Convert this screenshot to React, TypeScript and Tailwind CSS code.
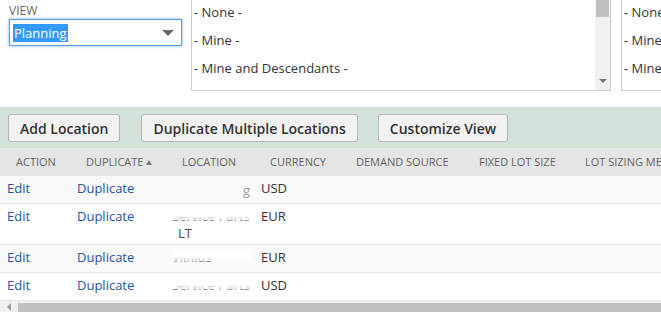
import React from "react";

const font = { fontFamily: '"Open Sans", "Liberation Sans", sans-serif' };

function ListBox({ withScroll }: { withScroll: boolean }) {
  const items = ["- None -", "- Mine -", "- Mine and Descendants -"];
  return (
    <div className="flex h-[91px] border-l border-r border-b border-[#cccccc] bg-white overflow-hidden">
      <div className="flex-1 flex flex-col -mt-[1px]">
        {items.map((t) => (
          <div key={t} className="h-[28px] flex items-center pl-[2px] text-[13px] text-[#333333] whitespace-nowrap">
            {t}
          </div>
        ))}
      </div>
      {withScroll && (
        <div className="w-[15px] bg-[#f0f0f0] flex flex-col justify-between items-center">
          <div className="w-[13px] h-[17px] bg-[#c1c1c1]" />
          <div className="mb-[7px] w-0 h-0 border-l-[4px] border-r-[4px] border-t-[4px] border-l-transparent border-r-transparent border-t-[#777777]" />
        </div>
      )}
    </div>
  );
}

function Redacted({ text, second }: { text: string; second?: string }) {
  return (
    <div className="relative">
      <div className="text-[#888888] whitespace-nowrap">{text}</div>
      {second && <div className="pl-[6px] text-[#444444]">{second}</div>}
      <div className="absolute left-0 top-0 w-[80px] h-[9px] bg-white" />
      <div className="absolute left-[-2px] top-[9px] w-[82px] h-[3px] bg-white opacity-60" />
    </div>
  );
}

export default function App() {
  const cols = "grid grid-cols-[70px_95px_89px_86px_123px_106px_120px]";
  const rows = [
    { cur: "USD", loc: <div className="relative h-[17px]"><span className="absolute left-[71px] top-[2px] text-[#999999]">g</span></div>, bg: "bg-[#f9f9f9]", h: "h-[28px]" },
    { cur: "EUR", loc: <Redacted text="Service Parts" second="LT" />, bg: "bg-white", h: "h-[41px]" },
    { cur: "EUR", loc: <Redacted text="Vilnius" />, bg: "bg-[#f9f9f9]", h: "h-[28px]" },
    { cur: "USD", loc: <Redacted text="Service Parts" />, bg: "bg-white", h: "h-[28px]" },
  ];
  return (
    <div style={font} className="w-[661px] h-[312px] overflow-hidden bg-white relative">
      <div className="flex h-[107px]">
        <div className="w-[191px] shrink-0 pl-[9px] pt-[4px]">
          <div className="text-[12px] leading-[14px] text-[#666666]">VIEW</div>
          <div className="mt-[1px] w-[173px] h-[27px] border border-[#5b9dd9] shadow-[0_0_3px_#7fb2e5] bg-white flex items-center justify-between pl-[3px] pr-[7px]">
            <span className="bg-[#3399ff] text-white text-[13px] leading-[18px] px-[1px]">Planning</span>
            <span className="w-0 h-0 border-l-[6px] border-r-[6px] border-t-[6px] border-l-transparent border-r-transparent border-t-[#666666]" />
          </div>
        </div>
        <div className="w-[420px] shrink-0">
          <ListBox withScroll={true} />
        </div>
        <div className="w-[10px] shrink-0" />
        <div className="w-[200px] shrink-0">
          <ListBox withScroll={false} />
        </div>
      </div>
      <div className="bg-[#d3e2d8] h-[41px] flex items-start pt-[7px] pl-[8px] gap-[20px]">
        {["Add Location", "Duplicate Multiple Locations", "Customize View"].map((b, i) => (
          <button
            key={b}
            className={`h-[28px] rounded-[3px] border border-[#b5b5b5] bg-[#f2f2f2] text-[14px] text-[#333333] font-semibold px-[11px] ${i === 1 ? "ml-[1px]" : ""}`}
          >
            {b}
          </button>
        ))}
      </div>
      <div className={`${cols} h-[28px] bg-[#e5e5e5] items-center text-[11px] text-[#666666] uppercase`}>
        <div className="pl-[16px]">Action</div>
        <div className="pl-[16px] flex items-center gap-[2px]">
          Duplicate
          <span className="w-0 h-0 border-l-[3px] border-r-[3px] border-b-[5px] border-l-transparent border-r-transparent border-b-[#777777]" />
        </div>
        <div className="pl-[17px]">Location</div>
        <div className="pl-[16px]">Currency</div>
        <div className="pl-[16px] whitespace-nowrap">Demand Source</div>
        <div className="pl-[16px] whitespace-nowrap">Fixed Lot Size</div>
        <div className="pl-[16px] whitespace-nowrap">Lot Sizing Method</div>
      </div>
      {rows.map((r, i) => (
        <div key={i} className={`${cols} ${r.h} ${r.bg} border-b border-[#e5e5e5] text-[13px] leading-[17px] pt-[4px]`}>
          <div className="pl-[7px] text-[#255599]">Edit</div>
          <div className="pl-[7px] text-[#255599]">Duplicate</div>
          <div className="pl-[7px]">{r.loc}</div>
          <div className="pl-[7px] text-[#333333]">{r.cur}</div>
          <div />
          <div />
          <div />
        </div>
      ))}
      <div className="h-[12px] bg-[#f0f0f0] flex items-center">
        <div className="w-[18px] flex justify-center">
          <div className="w-0 h-0 border-t-[4px] border-b-[4px] border-r-[4px] border-t-transparent border-b-transparent border-r-[#999999]" />
        </div>
        <div className="flex-1 h-[10px] mt-[2px] bg-[#c1c1c1]" />
      </div>
    </div>
  );
}
